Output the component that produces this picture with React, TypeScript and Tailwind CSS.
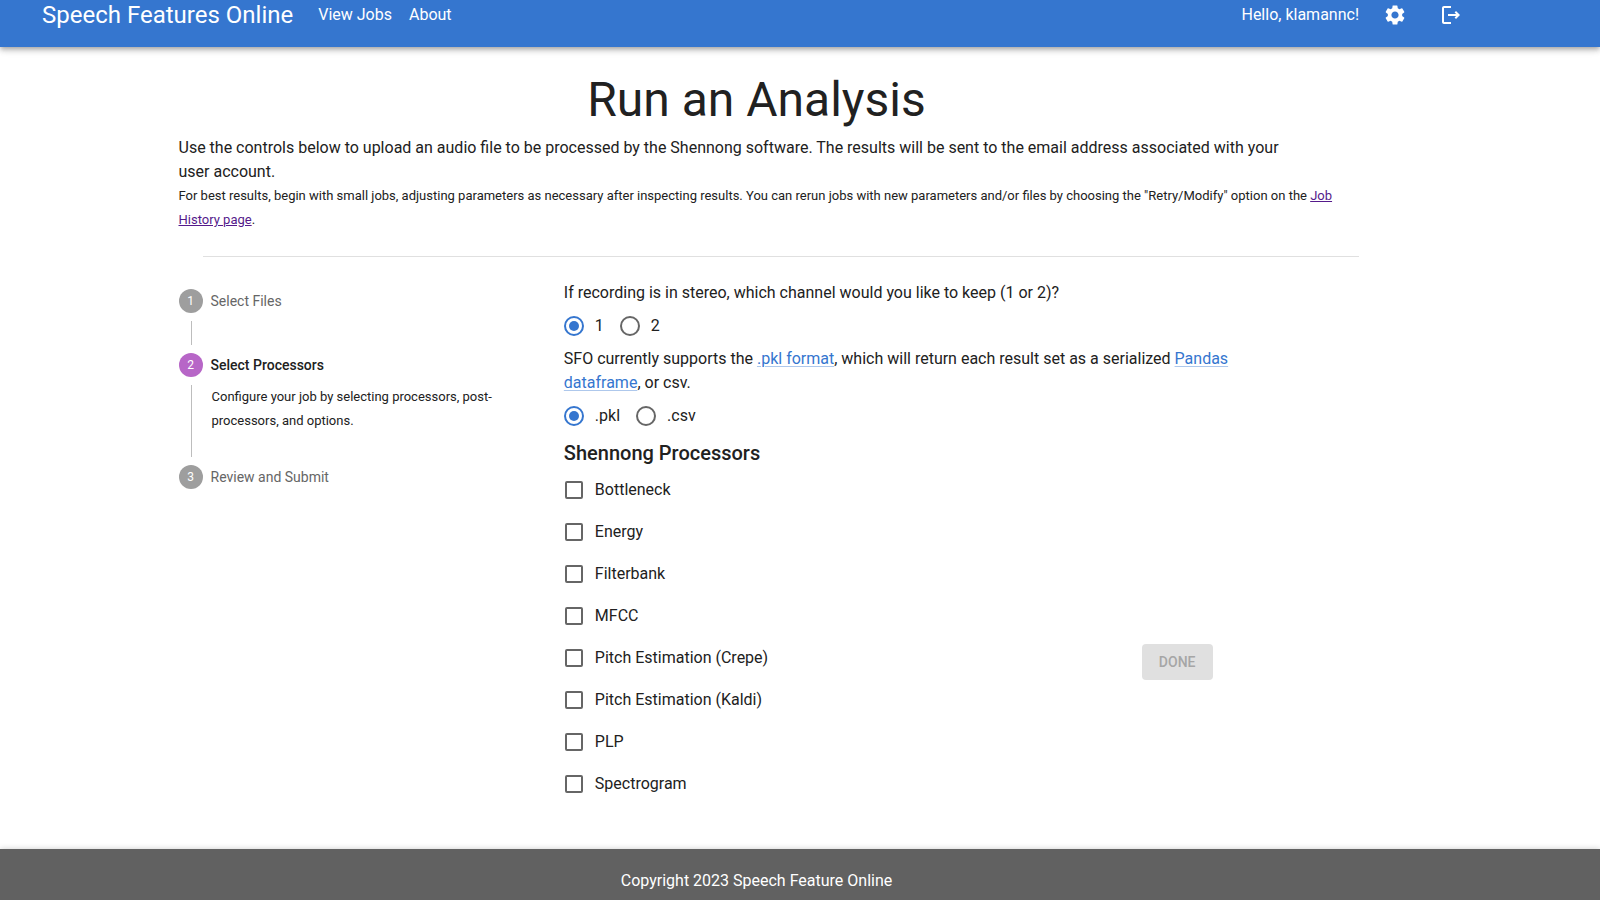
import { ComponentProps, useState } from "react";
import { MdOutlineLogout, MdSettings } from "react-icons/md";

const processors = [
  "Bottleneck",
  "Energy",
  "Filterbank",
  "MFCC",
  "Pitch Estimation (Crepe)",
  "Pitch Estimation (Kaldi)",
  "PLP",
  "Spectrogram",
];

const Header = () => (
  <header className="relative z-10 flex h-[47px] items-center bg-[#3576cf] pb-[17px] pl-[42px] pr-[137px] text-white shadow-[0_2px_4px_-1px_rgba(0,0,0,0.2),0_4px_5px_0_rgba(0,0,0,0.14),0_1px_10px_0_rgba(0,0,0,0.12)]">
    <a href="#" className="text-2xl">
      Speech Features Online
    </a>
    <nav className="ml-[25px] flex gap-[17px]">
      <a href="#jobs">View Jobs</a>
      <a href="#about">About</a>
    </nav>
    <div className="ml-auto flex items-center">
      <span>Hello, klamannc!</span>
      <button type="button" aria-label="Settings" className="ml-6">
        <MdSettings className="size-6" />
      </button>
      <button type="button" aria-label="Log out" className="ml-8">
        <MdOutlineLogout className="size-6" />
      </button>
    </div>
  </header>
);

interface StepProps {
  number: number;
  label: string;
  active?: boolean;
}

const Step = ({ number, label, active }: StepProps) => (
  <div className="flex items-center gap-2 text-sm">
    <span
      className={
        active
          ? "flex size-6 items-center justify-center rounded-full bg-[#b766c7] text-xs text-white"
          : "flex size-6 items-center justify-center rounded-full bg-[#9e9e9e] text-xs text-white"
      }
    >
      {number}
    </span>
    <span className={active ? "font-medium text-[#212121]" : "text-[#666666]"}>
      {label}
    </span>
  </div>
);

const Stepper = () => (
  <ol className="pt-2">
    <li>
      <Step number={1} label="Select Files" />
      <div className="my-2 ml-3 h-6 border-l border-[#bdbdbd]" />
    </li>
    <li>
      <Step number={2} label="Select Processors" active />
      <div className="my-2 ml-3 border-l border-[#bdbdbd] pb-6 pl-5 pr-12">
        <p className="text-[13px]/6">
          Configure your job by selecting processors, post-processors, and
          options.
        </p>
      </div>
    </li>
    <li>
      <Step number={3} label="Review and Submit" />
    </li>
  </ol>
);

const Radio = ({ label, ...props }: ComponentProps<"input"> & { label: string }) => (
  <label className="flex items-center gap-[11px]">
    <input
      type="radio"
      className="grid size-5 appearance-none place-content-center rounded-full border-2 border-[#666666] before:size-[10px] before:rounded-full checked:border-[#3576cf] checked:before:bg-[#3576cf]"
      {...props}
    />
    {label}
  </label>
);

const TextLink = ({ href, children }: ComponentProps<"a">) => (
  <a
    href={href}
    className="text-[#3576cf] underline decoration-[#3576cf]/40 underline-offset-2"
  >
    {children}
  </a>
);

const ProcessorsForm = () => {
  const [channel, setChannel] = useState("1");
  const [format, setFormat] = useState(".pkl");
  const [selected, setSelected] = useState<string[]>([]);

  const toggle = (name: string) =>
    setSelected((prev) =>
      prev.includes(name) ? prev.filter((p) => p !== name) : [...prev, name]
    );

  return (
    <form className="pr-16">
      <fieldset>
        <legend>
          If recording is in stereo, which channel would you like to keep (1 or
          2)?
        </legend>
        <div className="flex h-[42px] items-center gap-4">
          {["1", "2"].map((value) => (
            <Radio
              key={value}
              name="channel"
              label={value}
              checked={channel === value}
              onChange={() => setChannel(value)}
            />
          ))}
        </div>
      </fieldset>

      <p>
        SFO currently supports the <TextLink href="#pkl">.pkl format</TextLink>,
        which will return each result set as a serialized{" "}
        <TextLink href="#pandas">Pandas dataframe</TextLink>, or csv.
      </p>
      <div className="flex h-[42px] items-center gap-4">
        {[".pkl", ".csv"].map((value) => (
          <Radio
            key={value}
            name="format"
            label={value}
            checked={format === value}
            onChange={() => setFormat(value)}
          />
        ))}
      </div>

      <h2 className="text-xl/8 font-medium">Shennong Processors</h2>
      <div className="flex items-center justify-between pr-[58px]">
        <ul>
          {processors.map((name) => (
            <li key={name} className="flex h-[42px] items-center">
              <label className="flex items-center gap-3">
                <input
                  type="checkbox"
                  className="ml-px size-[18px] appearance-none rounded-xs border-2 border-[#666666] checked:border-[#3576cf] checked:bg-[#3576cf]"
                  checked={selected.includes(name)}
                  onChange={() => toggle(name)}
                />
                {name}
              </label>
            </li>
          ))}
        </ul>
        <div className="pt-[50px]">
          <button
            type="submit"
            disabled={selected.length === 0}
            className="rounded bg-[#3576cf] px-[17px] py-2 text-sm font-medium text-white disabled:bg-[#e0e0e0] disabled:text-[#a6a6a6]"
          >
            DONE
          </button>
        </div>
      </div>
    </form>
  );
};

const App = () => (
  <div className="flex min-h-screen flex-col bg-white font-[Roboto,sans-serif] text-base text-[#212121]">
    <Header />
    <main className="flex-1 pb-10 pr-[87px]">
      <div className="mx-auto max-w-[1156px]">
        <h1 className="pb-2 pt-[25px] text-center text-5xl/14">
          Run an Analysis
        </h1>
        <p className="pr-8">
          Use the controls below to upload an audio file to be processed by the
          Shennong software. The results will be sent to the email address
          associated with your user account.
        </p>
        <p className="text-[13px]/6">
          For best results, begin with small jobs, adjusting parameters as
          necessary after inspecting results. You can rerun jobs with new
          parameters and/or files by choosing the "Retry/Modify" option on the{" "}
          <a href="#history" className="text-[#551a8b] underline">
            Job History page
          </a>
          .
        </p>
        <hr className="-mr-6 ml-6 mt-6 border-[#e0e0e0]" />
        <div className="grid grid-cols-3 pt-6">
          <Stepper />
          <div className="col-span-2">
            <ProcessorsForm />
          </div>
        </div>
      </div>
    </main>
    <footer className="bg-[#616161] pb-[7px] pr-[87px] pt-5 text-center text-white shadow-[0_0_6px_rgba(0,0,0,0.2)]">
      Copyright 2023 Speech Feature Online
    </footer>
  </div>
);

export default App;
